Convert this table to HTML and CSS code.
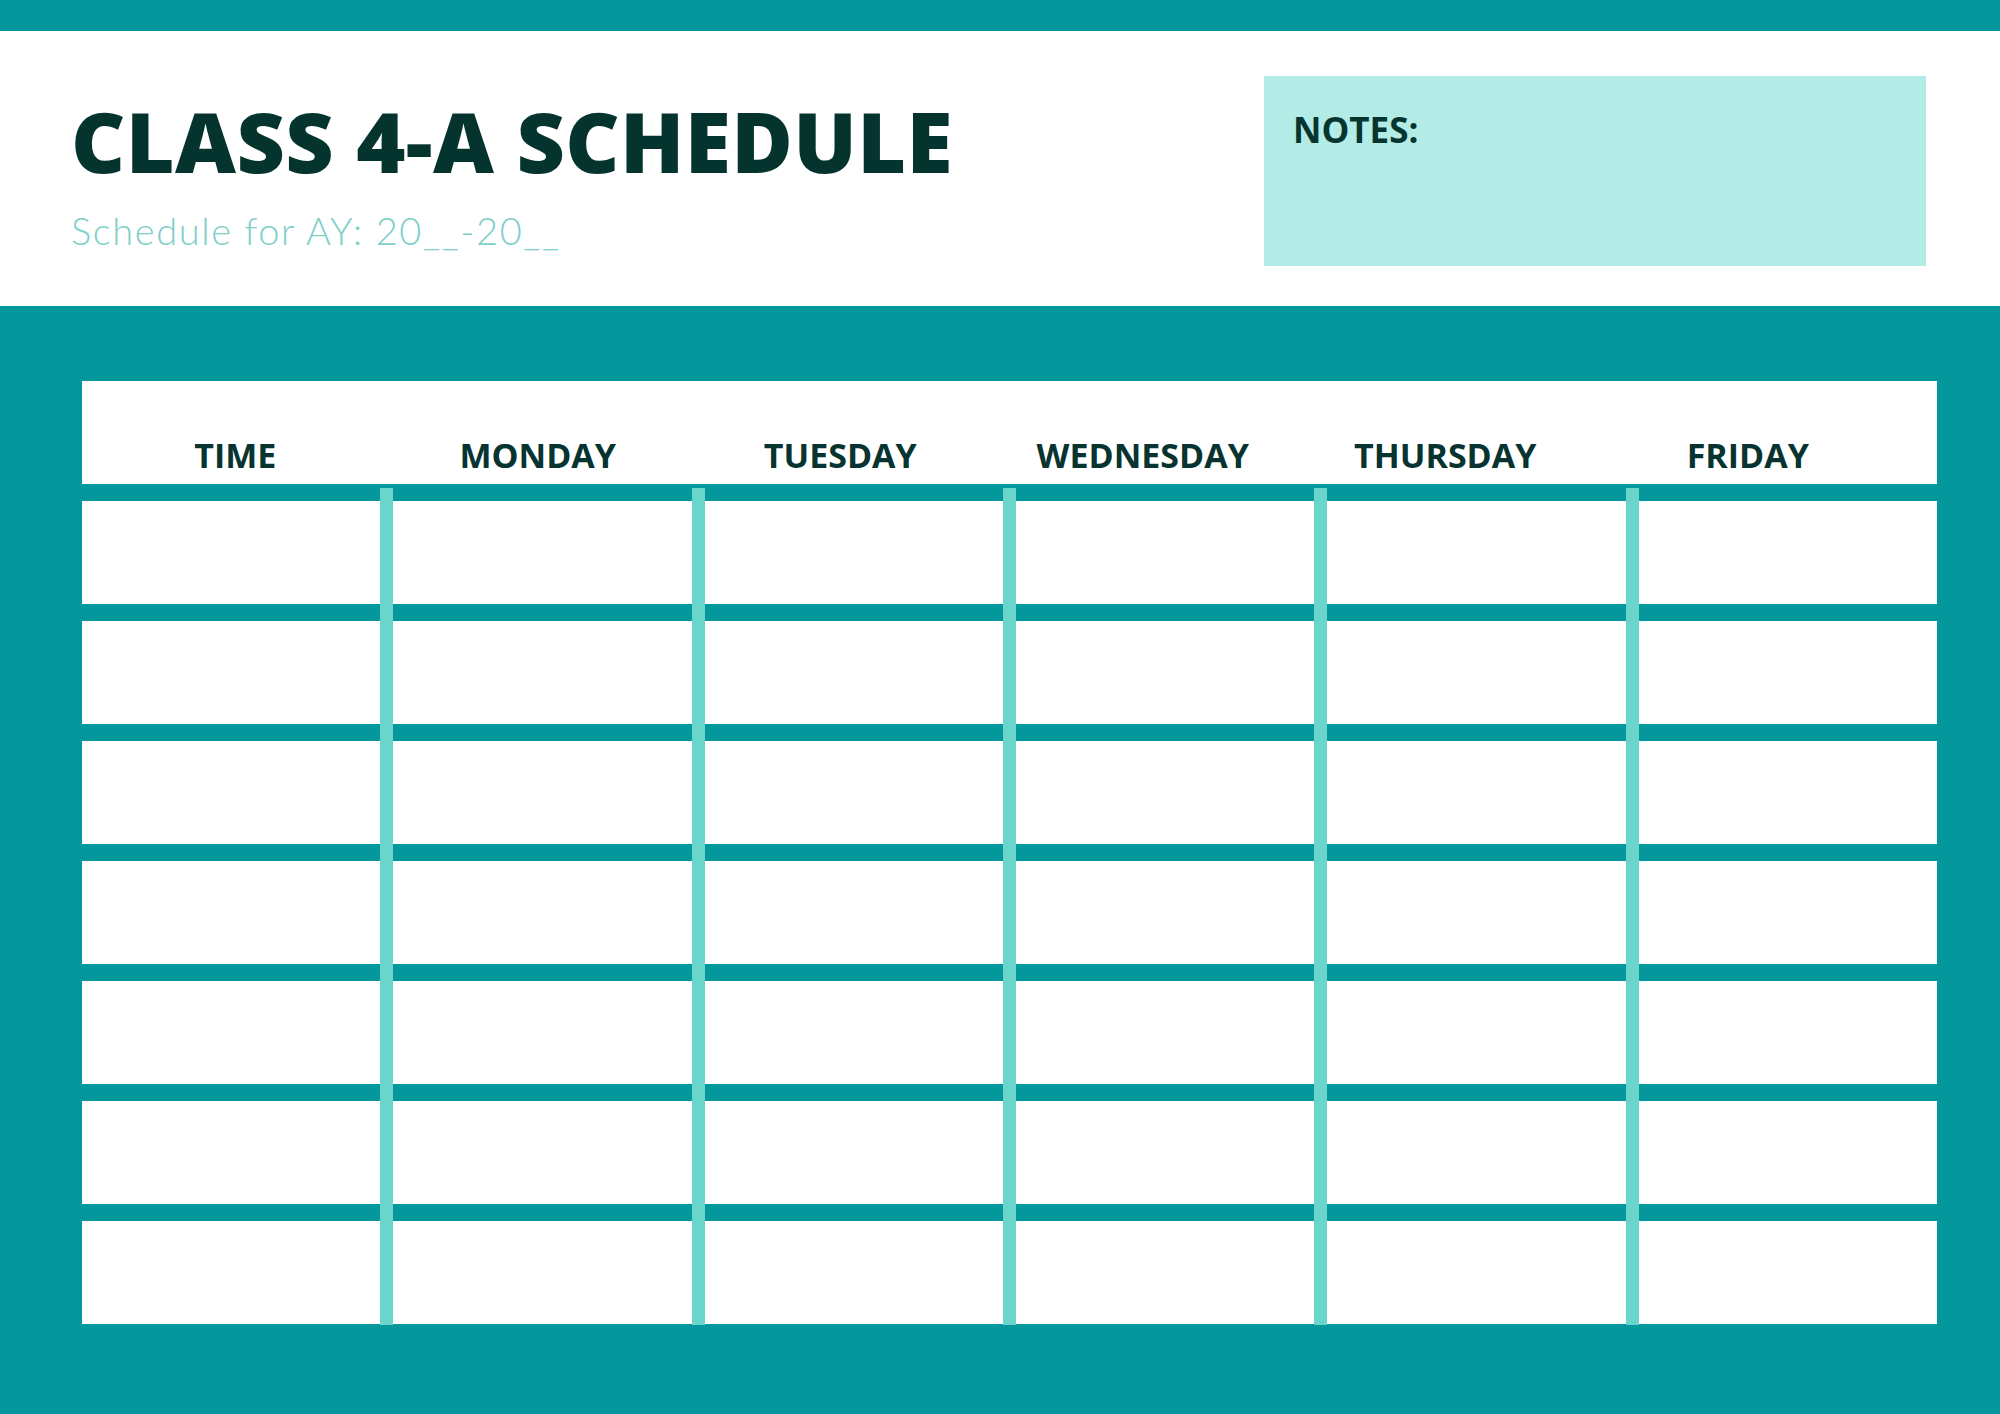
FILE: index.html
```html
<!DOCTYPE html>
<html lang="en">
<head>
<meta charset="utf-8">
<title>Class 4-A Schedule</title>
<link rel="stylesheet" href="styles.css">
</head>
<body>
<div class="page">
  <div class="topbar"></div>
  <header class="header">
    <div class="heading">
      <h1 class="title">CLASS 4-A SCHEDULE</h1>
      <p class="subtitle">Schedule for AY: 20__-20__</p>
    </div>
    <div class="notes">
      <span class="notes-label">NOTES:</span>
    </div>
  </header>
  <main class="main">
    <div class="schedule">
      <div class="head-row">
        <div class="head-cell">TIME</div>
        <div class="head-cell">MONDAY</div>
        <div class="head-cell">TUESDAY</div>
        <div class="head-cell">WEDNESDAY</div>
        <div class="head-cell">THURSDAY</div>
        <div class="head-cell">FRIDAY</div>
      </div>
      <div class="body">
        <div class="col"><div class="cell"></div><div class="cell"></div><div class="cell"></div><div class="cell"></div><div class="cell"></div><div class="cell"></div><div class="cell"></div></div>
        <div class="divider"></div>
        <div class="col"><div class="cell"></div><div class="cell"></div><div class="cell"></div><div class="cell"></div><div class="cell"></div><div class="cell"></div><div class="cell"></div></div>
        <div class="divider"></div>
        <div class="col"><div class="cell"></div><div class="cell"></div><div class="cell"></div><div class="cell"></div><div class="cell"></div><div class="cell"></div><div class="cell"></div></div>
        <div class="divider"></div>
        <div class="col"><div class="cell"></div><div class="cell"></div><div class="cell"></div><div class="cell"></div><div class="cell"></div><div class="cell"></div><div class="cell"></div></div>
        <div class="divider"></div>
        <div class="col"><div class="cell"></div><div class="cell"></div><div class="cell"></div><div class="cell"></div><div class="cell"></div><div class="cell"></div><div class="cell"></div></div>
        <div class="divider"></div>
        <div class="col"><div class="cell"></div><div class="cell"></div><div class="cell"></div><div class="cell"></div><div class="cell"></div><div class="cell"></div><div class="cell"></div></div>
      </div>
    </div>
  </main>
</div>
</body>
</html>
```

FILE: styles.css
```css
* { box-sizing: border-box; }

html, body {
  margin: 0;
  padding: 0;
  background: #04979c;
}

.page {
  width: 2000px;
  height: 1414px;
  display: flex;
  flex-direction: column;
  font-family: "Open Sans", "Liberation Sans", sans-serif;
  overflow: hidden;
}

.topbar {
  height: 31px;
  background: #04979c;
}

.header {
  height: 275px;
  background: #ffffff;
  display: flex;
  justify-content: space-between;
  align-items: flex-start;
  padding: 0 74px 0 71px;
}

.heading {
  padding-top: 68px;
}

.title {
  margin: 0;
  font-family: "Open Sans", "Liberation Sans", sans-serif;
  font-weight: 800;
  font-size: 84px;
  line-height: 1;
  color: #05332d;
  letter-spacing: 0.35px;
}

.subtitle {
  margin: 28px 0 0 0;
  font-family: "Lato", "Open Sans", sans-serif;
  font-weight: 300;
  font-size: 38px;
  line-height: 1;
  color: #7dcfc7;
  letter-spacing: 1.6px;
}

.notes {
  margin-top: 45px;
  width: 662px;
  height: 190px;
  background: #b3ebe6;
  padding: 36px 0 0 29px;
}

.notes-label {
  display: block;
  font-weight: 700;
  font-size: 35px;
  line-height: 1;
  color: #063530;
}

.main {
  flex: 1;
  background: #04979c;
  padding: 75px 63px 89px 82px;
  display: flex;
}

.schedule {
  flex: 1;
  display: flex;
  flex-direction: column;
}

.head-row {
  height: 103px;
  background: #ffffff;
  display: grid;
  grid-template-columns: repeat(6, 302.5px);
  padding-left: 2px;
}

.head-cell {
  text-align: center;
  padding-top: 57px;
  font-weight: 700;
  font-size: 34px;
  line-height: 1;
  color: #073430;
}

.body {
  flex: 1;
  display: flex;
}

.col {
  flex: 1;
  display: flex;
  flex-direction: column;
  gap: 17px;
  padding-top: 17px;
}

.cell {
  height: 103px;
  background: #ffffff;
}

.divider {
  width: 13px;
  margin-top: 4px;
  background: #69d5cb;
}
```
